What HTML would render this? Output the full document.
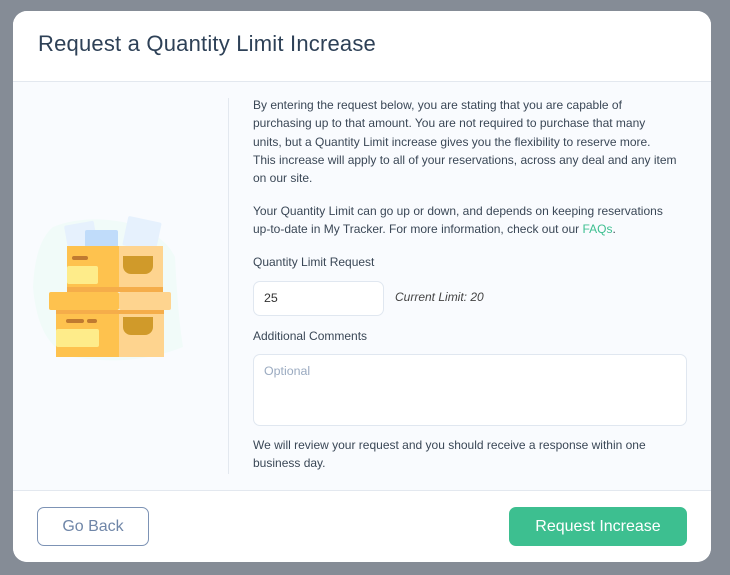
<!DOCTYPE html>
<html><head><style>
body{margin:0;width:730px;height:575px;background:#858c96;font-family:"Liberation Sans",sans-serif;position:relative;overflow:hidden}
.modal{position:absolute;left:13px;top:11px;width:698px;height:551px;background:#f9fbfe;border-radius:14px;overflow:hidden}
.hd{position:absolute;left:0;top:0;width:698px;height:70px;background:#fff;border-bottom:1px solid #e3e8ef}
.hd h1{margin:0;position:absolute;left:25px;top:20px;font-size:22px;font-weight:normal;color:#2e4157;letter-spacing:.2px}
.ft{position:absolute;left:0;top:479px;width:698px;height:72px;background:#fff;border-top:1px solid #e3e8ef}
.vl{position:absolute;left:215px;top:87px;width:1px;height:376px;background:#e3e8ef}
.tx{position:absolute;left:240px;font-size:12px;line-height:18.3px;color:#3a4756;white-space:nowrap}
.in{position:absolute;background:#fff;border:1px solid #e0e7f0;border-radius:7px;box-sizing:border-box;font-size:12.4px;color:#333}
.btn{position:absolute;top:496px;height:39px;box-sizing:border-box;border-radius:7px;font-size:16px;text-align:center;line-height:39px}
</style></head><body>
<div class="modal">
<div class="hd"><h1>Request a Quantity Limit Increase</h1></div>
<div class="vl"></div>
<svg style="position:absolute;left:0px;top:186px" width="180" height="175" viewBox="0 0 180 175">
<path d="M40 30 Q70 18 110 25 Q150 35 162 60 Q165 120 170 150 Q120 170 60 160 Q25 150 20 90 Q22 45 40 30Z" fill="#f1fbf9"/>
<rect x="53" y="26" width="30" height="26" rx="2" fill="#e6f1fd" transform="rotate(-10 68 39)"/>
<rect x="112" y="22" width="34" height="30" rx="2" fill="#e6f1fd" transform="rotate(12 129 37)"/>
<rect x="72" y="33" width="33" height="20" rx="2" fill="#c0dcfa"/>
<rect x="54" y="49" width="52" height="46" fill="#fec24e"/>
<rect x="106" y="49" width="44" height="46" fill="#fed48f"/>
<rect x="54" y="90" width="96" height="5" fill="#f5ad4a"/>
<rect x="59" y="59" width="16" height="4" rx="2" fill="#c07a30"/>
<rect x="54" y="69" width="31" height="18" rx="2" fill="#feec8a"/>
<path d="M110 59h30v10a8 8 0 0 1-8 8h-14a8 8 0 0 1-8-8z" fill="#d09a2a"/>
<rect x="36" y="95" width="70" height="18" rx="2" fill="#fec24e"/>
<rect x="106" y="95" width="52" height="18" rx="2" fill="#fed48f"/>
<rect x="43" y="113" width="63" height="47" fill="#fec24e"/>
<rect x="106" y="113" width="45" height="47" fill="#fed48f"/>
<rect x="43" y="113" width="108" height="4" fill="#f5ad4a"/>
<rect x="53" y="122" width="18" height="4" rx="2" fill="#c07a30"/>
<rect x="74" y="122" width="10" height="4" rx="2" fill="#c07a30"/>
<rect x="43" y="132" width="43" height="18" rx="2" fill="#feec8a"/>
<path d="M110 120h30v10a8 8 0 0 1-8 8h-14a8 8 0 0 1-8-8z" fill="#d09a2a"/>
</svg>
<div class="tx" style="top:85px">By entering the request below, you are stating that you are capable of<br>purchasing up to that amount. You are not required to purchase that many<br>units, but a Quantity Limit increase gives you the flexibility to reserve more.<br>This increase will apply to all of your reservations, across any deal and any item<br>on our site.</div>
<div class="tx" style="top:191px">Your Quantity Limit can go up or down, and depends on keeping reservations<br>up-to-date in My Tracker. For more information, check out our <span style="color:#3dbf90">FAQs</span>.</div>
<div class="tx" style="top:242px">Quantity Limit Request</div>
<div class="in" style="left:240px;top:270px;width:131px;height:35px;padding:9px 10px">25</div>
<div class="tx" style="top:277px;left:382px;font-style:italic;color:#444">Current Limit: 20</div>
<div class="tx" style="top:316px">Additional Comments</div>
<div class="in" style="left:240px;top:343px;width:434px;height:72px;padding:9px 10px;color:#9aaac0">Optional</div>
<div class="tx" style="top:425px">We will review your request and you should receive a response within one<br>business day.</div>
<div class="ft"></div>
<div class="btn" style="left:24px;width:112px;border:1px solid #7d93b5;color:#6f86a8;background:#fff;line-height:37px">Go Back</div>
<div class="btn" style="left:496px;width:178px;background:#3dbf90;color:#fff">Request Increase</div>
</div>
</body></html>
